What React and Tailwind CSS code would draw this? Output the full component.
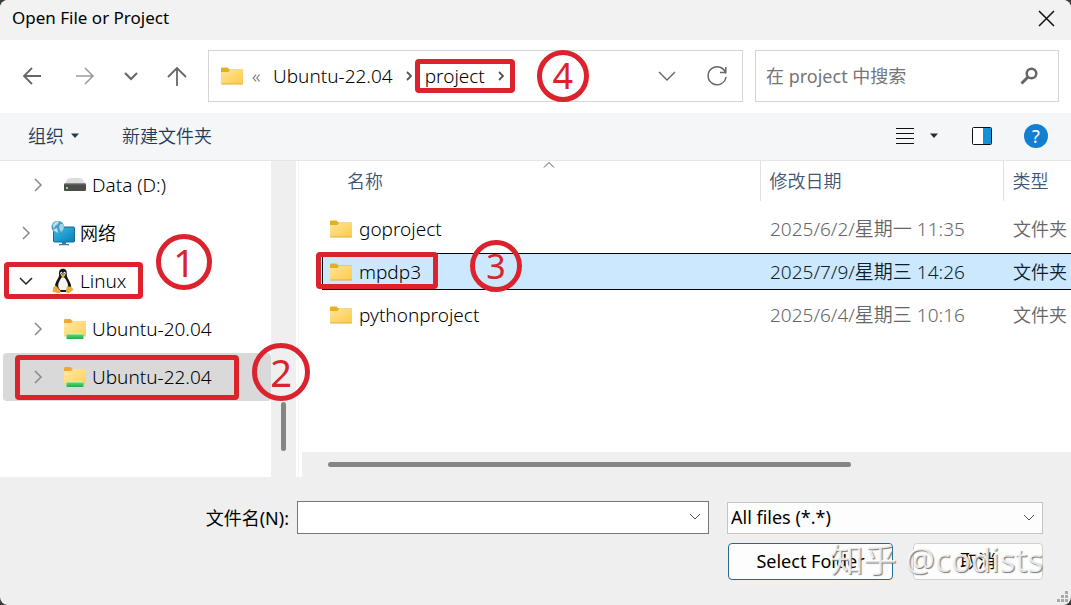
import React from "react";

function Folder() {
  return (
    <svg className="h-[18px] w-6 shrink-0" viewBox="0 0 24 18" aria-hidden="true">
      <defs>
        <linearGradient id="folderFace" x1="0" y1="0" x2="1" y2="1">
          <stop offset="0" stopColor="#ffe39a" />
          <stop offset="1" stopColor="#fccb45" />
        </linearGradient>
      </defs>
      <path d="M1 1.5Q1 .5 2 .5H7.5L9.5 2.5H22Q23 2.5 23 3.5V8H1Z" fill="#e3b11f" />
      <path d="M1 5H8.5L10 3H22.2Q23 3 23 3.8V16.5Q23 17.3 22.2 17.3H1.8Q1 17.3 1 16.5Z" fill="url(#folderFace)" />
      <path d="M1.3 17H22.7" stroke="#dba63a" strokeWidth=".8" />
    </svg>
  );
}

function ShareFolder() {
  return (
    <svg className="h-[22px] w-6 shrink-0" viewBox="0 0 24 22" aria-hidden="true">
      <defs>
        <linearGradient id="shareFace" x1="0" y1="0" x2="1" y2="1">
          <stop offset="0" stopColor="#ffe9a5" />
          <stop offset="1" stopColor="#fdd05a" />
        </linearGradient>
        <linearGradient id="shareBase" x1="0" y1="0" x2="0" y2="1">
          <stop offset="0" stopColor="#4fdc73" />
          <stop offset="1" stopColor="#23ab4c" />
        </linearGradient>
      </defs>
      <path d="M1 2Q1 1 2 1H7.5L9.5 3H22Q23 3 23 4V8H1Z" fill="#eeac25" />
      <path d="M1 5H8L10 3H22.2Q23 3 23 3.8V18.5H1Z" fill="url(#shareFace)" />
      <path d="M5 15H19L20.5 17.5H3.5Z" fill="#d8f0a0" />
      <rect x="3.5" y="16.5" width="17" height="4.5" rx=".8" fill="url(#shareBase)" />
    </svg>
  );
}

function Drive() {
  return (
    <svg className="h-[18px] w-6 shrink-0" viewBox="0 0 24 18" aria-hidden="true">
      <path d="M5 2.5Q12 1 19 2.5L23 8.5H1Z" fill="#dcdcde" />
      <rect x="1" y="7.5" width="22" height="7.5" rx="1" fill="#4b4d4b" />
      <path d="M1.5 8H22.5" stroke="#777" strokeWidth=".8" />
      <rect x="3" y="11" width="2" height="2" fill="#78e58c" />
    </svg>
  );
}

function Network() {
  return (
    <svg className="h-[26px] w-6 shrink-0" viewBox="0 0 24 26" aria-hidden="true">
      <defs>
        <linearGradient id="screen" x1="0" y1="0" x2="1" y2="1">
          <stop offset="0" stopColor="#38bfe8" />
          <stop offset="1" stopColor="#087fb8" />
        </linearGradient>
      </defs>
      <rect x="2.5" y="7" width="21" height="15" rx="1" fill="url(#screen)" stroke="#17698d" />
      <path d="M11 22H15V24H18V25.3H8V24H11Z" fill="#397f9f" />
      <circle cx="6.8" cy="7" r="6.3" fill="#4c9dc6" />
      <path d="M1.5 5Q4 1 8 1L7 4L4 6L3 9Z" fill="#b5dfec" />
      <path d="M9 4L12.5 4Q14 9 10 12L8 8Z" fill="#9bd5e7" />
      <path d="M2 10L6 8L7 13Z" fill="#c3e9f0" />
    </svg>
  );
}

function Tux() {
  return (
    <svg className="h-[26px] w-6 shrink-0" viewBox="0 0 24 26" aria-hidden="true">
      <path d="M12 .8C8.8 .8 7.7 3.2 8.1 6.4C8.3 9.4 5.4 12 4.3 16C3.5 19 4 22.5 7 24H17C20.4 22 20.7 18.5 19.5 15.5C18.3 12 15.6 9.8 15.8 6.3C16 3 15 .8 12 .8Z" fill="#161616" />
      <path d="M11.8 9C9.8 9.2 9.5 11.5 8 14C6.5 17 7 20 9.2 22H15C17.6 19.5 17.5 16.3 15.8 13.4C14.6 11.3 14.1 9 11.8 9Z" fill="#f5f5f3" />
      <ellipse cx="10.4" cy="5.3" rx="1.1" ry="1.5" fill="#fff" />
      <ellipse cx="13.5" cy="5.3" rx="1.2" ry="1.5" fill="#fff" />
      <circle cx="10.7" cy="5.5" r=".5" />
      <circle cx="13.2" cy="5.5" r=".5" />
      <path d="M9.5 7.4L12 6.2L14.6 7.4L12 9.5Z" fill="#eeb51e" />
      <path d="M4.7 17.5L9.8 23Q9.5 25.8 6.5 25L1.8 23.8Q.9 23 2 21.4L2 19.4Z" fill="#e7ae2f" />
      <path d="M16 18.2L20 18.8L22.7 21.6L18 25Q15 26 14.8 23Z" fill="#e7ae2f" />
    </svg>
  );
}

function Chevron({ open = false, className = "text-[#8a8a8a]" }) {
  return (
    <svg className={"size-4 shrink-0 " + className} viewBox="0 0 16 16" fill="none" stroke="currentColor" strokeWidth="1.5" aria-hidden="true">
      <path d={open ? "M2 5L8 11L14 5" : "M5 2L11 8L5 14"} />
    </svg>
  );
}

function Frame({ className }) {
  return <span className={"pointer-events-none absolute z-10 rounded-sm border-[5px] border-[#dc232d] " + className} />;
}

function Marker({ children, className }) {
  return (
    <span className={"pointer-events-none absolute z-20 flex items-center justify-center rounded-full border-[5px] border-[#dc232d] font-['Noto_Sans'] leading-none font-normal text-[#dc232d] " + className}>
      {children}
    </span>
  );
}

function TreeRow({ icon, label, level, open, selected, children }) {
  return (
    <li className={"relative ml-[3px] flex h-12 items-center rounded-sm " + (selected ? "bg-[#d9d9d9]" : "")}>
      <button type="button" className={"flex h-full w-full items-center text-left " + (level === 2 ? "pl-[27px]" : "pl-[15px]")}>
        <Chevron open={open} className={open ? "text-[#222]" : "text-[#8a8a8a]"} />
        <span className="ml-[17px] flex items-center gap-[5px]">
          {icon}
          <span>{label}</span>
        </span>
      </button>
      {children}
    </li>
  );
}

const files = [
  { name: "goproject", date: "2025/6/2/星期一 11:35" },
  { name: "mpdp3", date: "2025/7/9/星期三 14:26", selected: true },
  { name: "pythonproject", date: "2025/6/4/星期三 10:16" },
];

export default function App() {
  return (
    <div className="bg-[#3c3c3c]">
      <main className="relative flex min-h-screen flex-col overflow-hidden rounded-lg bg-[#efefef] font-['Noto_Sans','Noto_Sans_CJK_SC',sans-serif] text-lg leading-6 font-[350] text-black">
        <header className="flex h-10 items-center justify-between bg-[#f2f2f2] pr-4 pb-1 pl-3">
          <h1 className="text-[17px] font-normal">Open File or Project</h1>
          <button type="button" aria-label="Close">
            <svg className="size-[17px]" viewBox="0 0 17 17" fill="none" stroke="#111" strokeWidth="1.5"><path d="M1 1L16 16M16 1L1 16" /></svg>
          </button>
        </header>

        <nav className="flex h-[73px] items-center bg-white pr-3 pb-0.5 pl-[22px]">
          <div className="flex w-[186px] items-center gap-[29px] text-[#666]">
            <button type="button" aria-label="Back" className="mr-1"><svg className="size-5" viewBox="0 0 20 20" fill="none" stroke="currentColor" strokeWidth="1.8"><path d="M19 10H2M10 2L2 10L10 18" /></svg></button>
            <button type="button" aria-label="Forward" className="text-[#9b9b9b]"><svg className="size-5" viewBox="0 0 20 20" fill="none" stroke="currentColor" strokeWidth="1.6"><path d="M1 10H18M10 2L18 10L10 18" /></svg></button>
            <button type="button" aria-label="Recent locations"><svg className="h-5 w-3.5" viewBox="0 0 14 20" fill="none" stroke="currentColor" strokeWidth="2"><path d="M1 7L7 13L13 7" /></svg></button>
            <button type="button" aria-label="Up"><svg className="size-5" viewBox="0 0 20 20" fill="none" stroke="currentColor" strokeWidth="1.8"><path d="M10 20V2M1 11L10 2L19 11" /></svg></button>
          </div>
          <div className="flex h-[52px] min-w-0 flex-1 items-center border border-[#d5d5d5] pr-3.5 pl-[11px] text-[19px]">
            <Folder />
            <span className="ml-2 w-3 text-[#666]">«</span>
            <button type="button" className="ml-[9px]">Ubuntu-22.04</button>
            <svg className="ml-3 h-3 w-2" viewBox="0 0 8 12" fill="none" stroke="#555" strokeWidth="1.8"><path d="M2 2L6 6L2 10" /></svg>
            <div className="relative ml-3 flex items-center">
              <button type="button">project</button>
              <svg className="ml-3 h-3 w-2" viewBox="0 0 8 12" fill="none" stroke="#555" strokeWidth="1.8"><path d="M2 2L6 6L2 10" /></svg>
              <Frame className="-inset-x-2.5 -inset-y-[5px]" />
              <Marker className="top-1/2 left-full ml-8 size-[52px] -translate-y-1/2 text-[36px]">4</Marker>
            </div>
            <button type="button" aria-label="Show history" className="ml-auto"><svg className="h-3 w-[18px]" viewBox="0 0 18 12" fill="none" stroke="#666" strokeWidth="1.4"><path d="M1 2L9 10L17 2" /></svg></button>
            <button type="button" aria-label="Refresh" className="ml-[30px]"><svg className="size-[22px]" viewBox="0 0 22 22" fill="none" stroke="#666" strokeWidth="1.5"><path d="M19.8 8.5A9 9 0 1 0 20 12M19.8 2V7.5H14" /></svg></button>
          </div>
          <label className="ml-3 flex h-[52px] w-[304px] items-center border border-[#d5d5d5] pr-5 pl-2.5">
            <input type="search" aria-label="在 project 中搜索" placeholder="在 project 中搜索" className="min-w-0 flex-1 bg-transparent font-normal outline-none placeholder:text-[#757575]" />
            <svg className="size-[18px]" viewBox="0 0 18 18" fill="none" stroke="#666"><circle cx="11.5" cy="6.5" r="4.8" strokeWidth="2.5" /><path d="M8 10L1.5 16.5" strokeWidth="3" /></svg>
          </label>
        </nav>

        <div className="flex h-12 items-center border-b border-[#e6e6e6] bg-[#f4f6f8] pr-[23px] pb-0.5 pl-7 text-[#1f3b57]">
          <button type="button" className="flex items-center gap-[7px]">组织<svg className="h-1.5 w-2" viewBox="0 0 8 6"><path d="M0 .5H8L4 5Z" fill="#1f3b57" /></svg></button>
          <button type="button" className="ml-[43px]">新建文件夹</button>
          <button type="button" aria-label="View" className="ml-auto flex items-center gap-4">
            <svg className="h-[18px] w-[18px]" viewBox="0 0 18 18" stroke="#111" strokeWidth="1"><path d="M0 1.5H18M0 6.5H18M0 11.5H18M0 16.5H18" /></svg>
            <svg className="h-1.5 w-2" viewBox="0 0 8 6"><path d="M0 .5H8L4 5Z" fill="#1f2f40" /></svg>
          </button>
          <button type="button" aria-label="Preview pane" className="ml-[34px]"><svg className="h-[18px] w-5" viewBox="0 0 20 18"><rect x=".5" y=".5" width="19" height="17" rx="1" fill="#fff" stroke="#111" /><path d="M11 1H19V17H11Z" fill="#1590d6" /></svg></button>
          <button type="button" aria-label="Help" className="ml-8 flex size-6 items-center justify-center rounded-full bg-[#127fd2] leading-none font-normal text-white">?</button>
        </div>

        <section className="flex min-h-[316px] flex-1">
          <div className="relative flex w-[299px] shrink-0 border-r border-[#f3f3f3] bg-white">
            <ul className="w-[271px] text-[19px]">
              <TreeRow level={2} icon={<Drive />} label="Data (D:)" />
              <TreeRow level={1} icon={<Network />} label={<span className="text-lg">网络</span>} />
              <TreeRow level={1} icon={<Tux />} label="Linux" open>
                <Frame className="top-[5px] left-px h-[37px] w-[139px]" />
                <Marker className="-top-[23px] left-[153px] size-[56px] text-[38px]">1</Marker>
              </TreeRow>
              <TreeRow level={2} icon={<ShareFolder />} label="Ubuntu-20.04" />
              <TreeRow level={2} icon={<ShareFolder />} label="Ubuntu-22.04" selected>
                <Frame className="top-0.5 left-3 h-[45px] w-[224px]" />
                <Marker className="-top-2.5 left-[249px] size-[58px] text-[38px]">2</Marker>
              </TreeRow>
            </ul>
            <div className="flex w-[25px] items-end justify-center bg-[#efefef] pb-[26px]">
              <div className="h-[49px] w-[5px] rounded-full bg-[#858585]" />
            </div>
          </div>

          <div className="flex min-w-0 flex-1 flex-col bg-white pl-[3px]">
            <div className="flex-1 overflow-hidden pl-5">
              <table className="w-full min-w-[749px] table-fixed border-collapse text-left">
                <colgroup><col /><col className="w-[243px]" /><col className="w-[68px]" /></colgroup>
                <thead>
                  <tr className="h-10 text-[#3f5674]">
                    <th className="relative pl-[25px] font-[350]">
                      名称
                      <svg className="absolute top-0 left-1/2 ml-0.5 h-2 w-3" viewBox="0 0 12 8" fill="none" stroke="#555"><path d="M1 6.5L6 1.5L11 6.5" /></svg>
                    </th>
                    <th className="border-l border-[#e1e1e1] pl-[9px] font-[350]">修改日期</th>
                    <th className="border-l border-[#e1e1e1] pl-[9px] font-[350]">类型</th>
                  </tr>
                </thead>
                <tbody>
                  <tr className="h-1.5" aria-hidden="true" />
                  {files.map((file) => (
                    <tr key={file.name} className={"h-[43px] whitespace-nowrap " + (file.selected ? "text-[#0d1f2d]" : "text-[#666]")}>
                      <td className="relative p-0">
                        <div className={"flex h-[37px] items-center gap-1.5 text-[19px] text-black " + (file.selected ? "border-y border-l border-black bg-[#cce8ff] pl-1.5" : "pl-[7px]")}><Folder />{file.name}</div>
                        {file.selected && <><Frame className="top-0.5 -left-1.5 h-[37px] w-[122px]" /><Marker className="-top-2.5 left-[148px] size-[52px] text-[34px]">3</Marker></>}
                      </td>
                      <td className="p-0"><div className={"flex h-[37px] items-center pl-2.5 text-[19px] " + (file.selected ? "border-y border-black bg-[#cce8ff]" : "")}>{file.date}</div></td>
                      <td className="p-0"><div className={"flex h-[37px] items-center pl-2.5 " + (file.selected ? "border-y border-black bg-[#cce8ff]" : "")}>文件夹</div></td>
                    </tr>
                  ))}
                </tbody>
              </table>
            </div>
            <div className="h-[25px] bg-[#efefef] pt-2.5 pr-[220px] pl-[26px]"><div className="h-[5px] rounded-full bg-[#858585]" /></div>
          </div>
        </section>

        <footer className="relative flex flex-col gap-[9px] pt-6 pr-7 pb-[25px] font-normal">
          <div className="flex items-center">
            <label htmlFor="filename" className="w-[289px] text-right">文件名(N):</label>
            <div className="relative ml-2 h-[33px] min-w-0 flex-1">
              <input id="filename" className="h-full w-full border border-[#777] bg-white pr-8 pl-2 outline-none" />
              <svg className="pointer-events-none absolute top-3 right-2 h-2 w-3" viewBox="0 0 12 8" fill="none" stroke="#555"><path d="M1 1L6 6L11 1" /></svg>
            </div>
            <div className="relative ml-[18px] h-8 w-[316px]">
              <select aria-label="File type" className="h-full w-full appearance-none border border-[#c5c5c5] bg-[#fdfdfd] pb-0.5 pl-[3px]"><option>All files (*.*)</option></select>
              <svg className="pointer-events-none absolute top-3 right-2 h-2 w-3" viewBox="0 0 12 8" fill="none" stroke="#555"><path d="M1 1L6 6L11 1" /></svg>
            </div>
          </div>
          <div className="flex justify-end gap-5">
            <button type="button" className="h-[37px] w-[165px] rounded border border-[#216b93] bg-[#fdfdfd] pb-0.5">Select Folder</button>
            <button type="button" className="h-[37px] w-[130px] rounded border border-[#d0d0d0] bg-[#fdfdfd] pb-0.5">取消</button>
          </div>
          <span className="pointer-events-none absolute right-7 bottom-[27px] text-[33px] leading-9 whitespace-nowrap text-white/80 [text-shadow:1px_1px_1px_#777]">知乎 @codists</span>
          <svg className="absolute right-0 bottom-0 size-[14px]" viewBox="0 0 14 14" fill="#aaa" aria-hidden="true"><path d="M8 0h3v3H8ZM4 4h3v3H4ZM8 4h3v3H8ZM0 8h3v3H0ZM4 8h3v3H4ZM8 8h3v3H8Z" /></svg>
        </footer>
      </main>
    </div>
  );
}
